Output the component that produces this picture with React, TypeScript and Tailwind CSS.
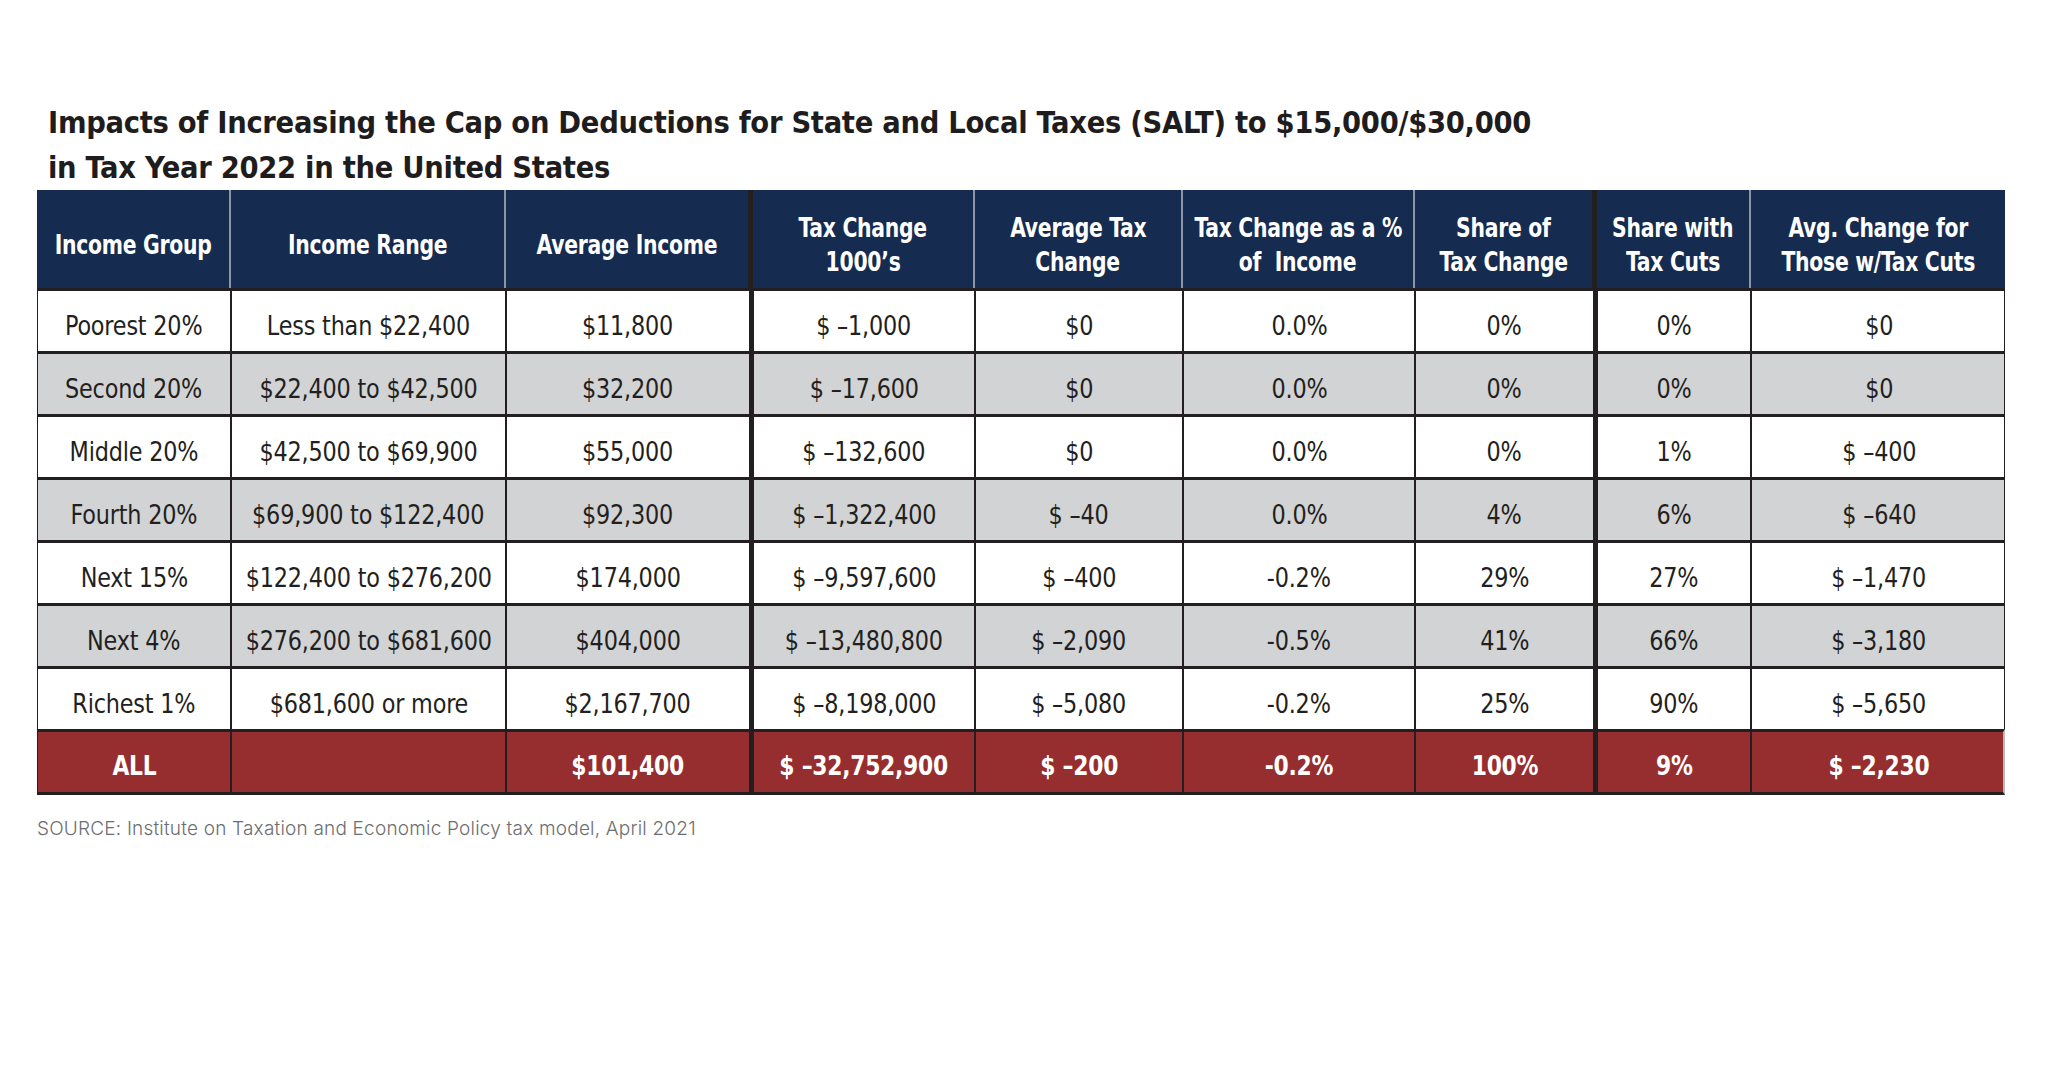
const rows = [
  ["Poorest 20%", "Less than $22,400", "$11,800", "$ –1,000", "$0", "0.0%", "0%", "0%", "$0"],
  ["Second 20%", "$22,400 to $42,500", "$32,200", "$ –17,600", "$0", "0.0%", "0%", "0%", "$0"],
  ["Middle 20%", "$42,500 to $69,900", "$55,000", "$ –132,600", "$0", "0.0%", "0%", "1%", "$ –400"],
  ["Fourth 20%", "$69,900 to $122,400", "$92,300", "$ –1,322,400", "$ –40", "0.0%", "4%", "6%", "$ –640"],
  ["Next 15%", "$122,400 to $276,200", "$174,000", "$ –9,597,600", "$ –400", "-0.2%", "29%", "27%", "$ –1,470"],
  ["Next 4%", "$276,200 to $681,600", "$404,000", "$ –13,480,800", "$ –2,090", "-0.5%", "41%", "66%", "$ –3,180"],
  ["Richest 1%", "$681,600 or more", "$2,167,700", "$ –8,198,000", "$ –5,080", "-0.2%", "25%", "90%", "$ –5,650"],
]

const total = ["ALL", "", "$101,400", "$ –32,752,900", "$ –200", "-0.2%", "100%", "9%", "$ –2,230"]

const headers = [
  ["Income Group"],
  ["Income Range"],
  ["Average Income"],
  ["Tax Change", "1000’s"],
  ["Average Tax", "Change"],
  ["Tax Change as a %", "of  Income"],
  ["Share of", "Tax Change"],
  ["Share with", "Tax Cuts"],
  ["Avg. Change for", "Those w/Tax Cuts"],
]

const grid = "grid grid-cols-[192px_275px_244px_225px_208px_232px_179px_157px_256px]"

function headBorder(i: number) {
  if (i === 0) return ""
  if (i === 3 || i === 7) return "border-l-[5px] border-[#231f20]"
  return "border-l-2 border-[#8d95a5]"
}

function bodyBorder(i: number) {
  if (i === 0) return ""
  if (i === 3 || i === 7) return "border-l-[5px] border-[#231f20]"
  return "border-l-2 border-[#231f20]"
}

export default function App() {
  return (
    <div className="min-h-screen w-[2048px] bg-white pt-[100px] pl-[37px] font-['DejaVu_Sans_Condensed','DejaVu_Sans',sans-serif]">
      <h1 className="ml-[11px] text-[30.5px] font-bold leading-[45px] tracking-[-0.3px] text-[#1f1c1d]">
        Impacts of Increasing the Cap on Deductions for State and Local Taxes (SALT) to $15,000/$30,000
        <br />
        in Tax Year 2022 in the United States
      </h1>

      <div className="w-[1968px]">
        <div className={`${grid} h-[98px] bg-[#152b50]`}>
          {headers.map((h, i) => (
            <div
              key={i}
              className={`flex flex-col items-center justify-center pt-[12px] text-center text-[26px] font-bold leading-[34px] tracking-[-0.3px] text-white ${headBorder(i)}`}
            >
              {h.map((line, j) => (
                <span key={j} className="inline-block scale-x-[0.87] whitespace-pre">{line}</span>
              ))}
            </div>
          ))}
        </div>

        {rows.map((r, ri) => (
          <div
            key={ri}
            className={`${grid} h-[63px] border-t-[3px] border-l border-r border-[#231f20] ${ri % 2 === 1 ? "bg-[#d1d3d4]" : "bg-white"}`}
          >
            {r.map((c, i) => (
              <div
                key={i}
                className={`flex items-center justify-center pt-[10px] whitespace-nowrap text-[27px] tracking-[-0.2px] text-[#231f20] ${bodyBorder(i)}`}
              >
                <span className="inline-block scale-x-[0.92]">{c}</span>
              </div>
            ))}
          </div>
        ))}

        <div className={`${grid} h-[66px] border-y-[3px] border-l border-r-2 border-[#231f20] border-r-[#b9babc] bg-[#962e2f]`}>
          {total.map((c, i) => (
            <div
              key={i}
              className={`flex items-center justify-center pt-[8px] whitespace-nowrap text-[27px] font-bold tracking-[-0.3px] text-white ${bodyBorder(i)}`}
            >
              <span className="inline-block scale-x-[0.9]">{c}</span>
            </div>
          ))}
        </div>
      </div>

      <p className="mt-[22px] font-['Inter',sans-serif] text-[19px] font-light leading-[24px] tracking-[0.2px] text-[#6d6e71]">
        SOURCE: Institute on Taxation and Economic Policy tax model, April 2021
      </p>
    </div>
  )
}
